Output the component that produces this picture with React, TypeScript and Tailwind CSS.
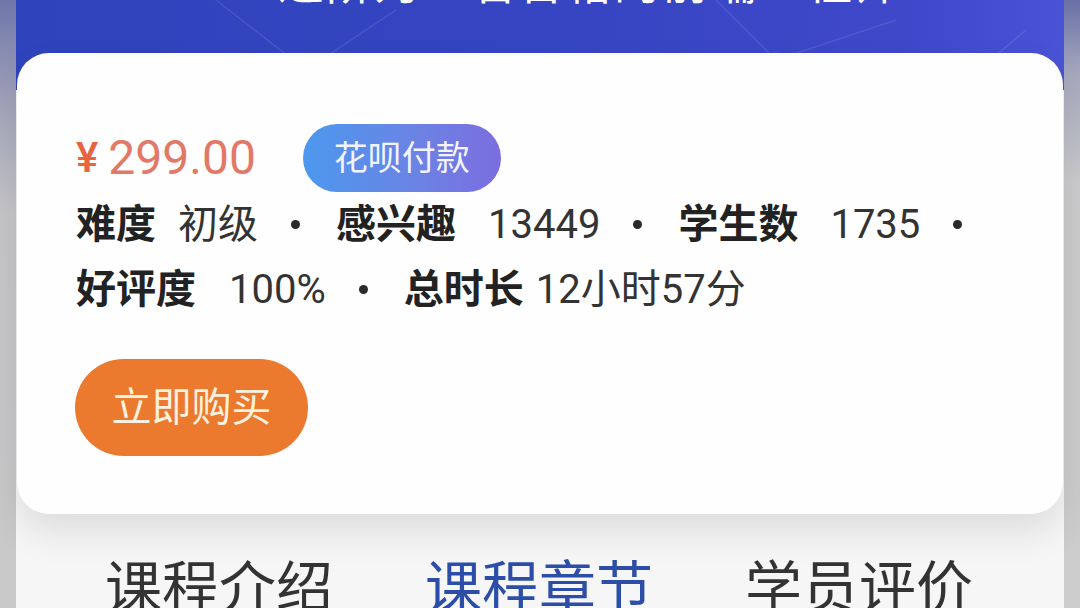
import React from "react";

const font = { fontFamily: "Roboto, 'Noto Sans CJK SC', sans-serif" };

function Dot() {
  return <span className="inline-block w-[9px] h-[9px] rounded-full bg-[#2a2a2a] ml-[33px] mr-[36px] self-center" />;
}

export default function App() {
  return (
    <div className="flex w-[1080px] h-[608px] overflow-hidden" style={font}>
      <div className="w-4 shrink-0 bg-[linear-gradient(to_bottom,#6f76a8_0%,#a9abbd_20%,#c6c6c9_35%,#c9c9c9_100%)]" />
      <div className="w-[1048px] shrink-0 flex flex-col bg-[#f6f6f7]">
        <div className="relative h-[90px] shrink-0 overflow-hidden bg-[linear-gradient(90deg,#2f43bc_0%,#3645c2_50%,#3f48c9_85%,#4a53d6_100%)]">
          <svg className="absolute inset-0" width="1048" height="90" viewBox="0 0 1048 90">
            <g stroke="#ffffff" strokeOpacity="0.1" strokeWidth="1.5" fill="none">
              <path d="M200 0 L290 70 L380 10" />
              <path d="M290 70 L420 90" />
              <path d="M700 0 L760 60 L880 20" />
              <path d="M940 90 L1010 30" />
            </g>
            <circle cx="290" cy="72" r="14" fill="#ffffff" fillOpacity="0.08" />
            <circle cx="760" cy="60" r="8" fill="#ffffff" fillOpacity="0.07" />
          </svg>
          <div className="relative mt-[-42px] pl-[262px] text-[46px] leading-[50px] text-white tracking-[2px] whitespace-nowrap">
            进阶为一名合格的前端工程师
          </div>
        </div>

        <div className="relative mt-[-37px] mx-px h-[461px] shrink-0 rounded-[32px] bg-[#fefefe] shadow-[0_18px_36px_rgba(0,0,0,0.10)] pl-[59px] pt-[71px]">
          <div className="flex items-center h-[68px]">
            <span className="text-[42px] font-medium text-[#e8643f] leading-none">¥</span>
            <span className="ml-[10px] text-[48px] text-[#e27866] leading-none">299.00</span>
            <div className="ml-[47px] w-[198px] h-[68px] rounded-full bg-[linear-gradient(90deg,#4c98ee_0%,#6a84e4_55%,#7c6de0_100%)] flex items-center justify-center text-[34px] text-[#f3f4ff]">
              花呗付款
            </div>
          </div>

          <div className="flex items-center h-[65px] text-[40px] text-[#333]">
            <span className="font-bold text-[#222]">难度</span>
            <span className="ml-[22px]">初级</span>
            <Dot />
            <span className="font-bold text-[#222]">感兴趣</span>
            <span className="ml-[32px]">13449</span>
            <Dot />
            <span className="font-bold text-[#222]">学生数</span>
            <span className="ml-[32px]">1735</span>
            <Dot />
          </div>
          <div className="flex items-center h-[65px] text-[40px] text-[#333]">
            <span className="font-bold text-[#222]">好评度</span>
            <span className="ml-[33px]">100%</span>
            <Dot />
            <span className="font-bold text-[#222]">总时长</span>
            <span className="ml-[12px]">12小时57分</span>
          </div>

          <div className="mt-[37px] w-[233px] h-[97px] -ml-px rounded-full bg-[#eb7a2e] flex items-center justify-center text-[40px] text-[#fcf0df]">
            立即购买
          </div>
        </div>

        <div className="flex gap-[92px] pl-[89px] mt-[46px] text-[57px] leading-none whitespace-nowrap">
          <span className="text-[#333]">课程介绍</span>
          <span className="text-[#2c4ea8]">课程章节</span>
          <span className="text-[#333]">学员评价</span>
        </div>
      </div>
      <div className="w-4 shrink-0 bg-[linear-gradient(to_bottom,#6a70a6_0%,#a5a8bd_12%,#cbcbcd_30%,#cccccc_100%)]" />
    </div>
  );
}
